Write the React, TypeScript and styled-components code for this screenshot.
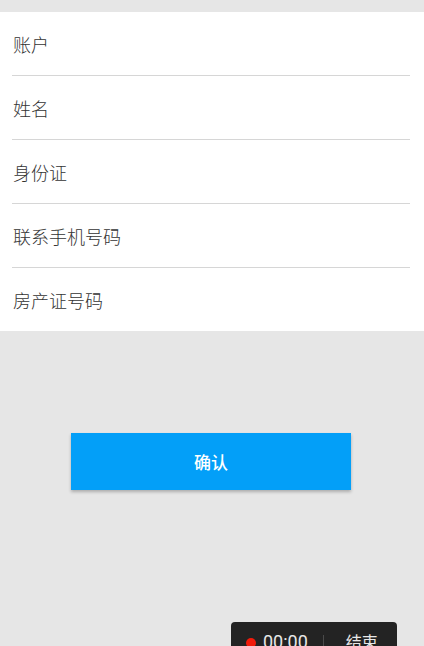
import styled, { createGlobalStyle } from 'styled-components'

const GlobalStyle = createGlobalStyle`
  html, body {
    margin: 0;
    padding: 0;
    background: #e6e6e6;
    font-family: 'Roboto', 'Noto Sans CJK SC', sans-serif;
  }
`

const fields = ['账户', '姓名', '身份证', '联系手机号码', '房产证号码']

const App = () => {
  return (
    <Page>
      <GlobalStyle />
      <Form>
        {fields.map((label, i) => (
          <Row key={label} last={i === fields.length - 1}>
            <Label>{label}</Label>
          </Row>
        ))}
      </Form>
      <ConfirmButton>确认</ConfirmButton>
      <Recorder>
        <RecDot />
        <RecTime>00:00</RecTime>
        <RecDivider />
        <RecStop>结束</RecStop>
      </Recorder>
    </Page>
  )
}

const Page = styled.div`
  position: relative;
  width: 424px;
  height: 646px;
  overflow: hidden;
  padding-top: 12px;
  box-sizing: border-box;
  background: #e6e6e6;
`

const Form = styled.div`
  background: #ffffff;
  display: flex;
  flex-direction: column;
  padding: 0 14px 0 12px;
`

const Row = styled.div<{ last?: boolean }>`
  height: 63px;
  display: flex;
  align-items: center;
  border-bottom: ${(p) => (p.last ? 'none' : '1px solid #d6d6d6')};
  &:first-child {
    height: 63px;
  }
`

const Label = styled.span`
  font-family: 'Noto Sans CJK SC', sans-serif;
  font-size: 18px;
  font-weight: 300;
  color: #333333;
  padding-left: 1px;
`

const ConfirmButton = styled.button`
  display: flex;
  align-items: center;
  justify-content: center;
  margin: 102px 0 0 71px;
  width: 280px;
  height: 57px;
  border: none;
  border-radius: 0;
  background: #039ff8;
  color: #ffffff;
  font-family: 'Noto Sans CJK SC', sans-serif;
  font-size: 17px;
  font-weight: 500;
  box-shadow: 0 2px 3px rgba(0, 0, 0, 0.25);
`

const Recorder = styled.div`
  position: absolute;
  left: 231px;
  top: 622px;
  width: 166px;
  height: 34px;
  background: #232323;
  border-radius: 4px;
  display: flex;
  align-items: center;
  padding: 4px 0 0 15px;
  box-sizing: border-box;
`

const RecDot = styled.span`
  width: 10px;
  height: 10px;
  border-radius: 50%;
  background: #f21a0a;
  margin-right: 7px;
  margin-top: 4px;
`

const RecTime = styled.span`
  font-family: 'Roboto', sans-serif;
  font-size: 18px;
  color: #e8e8e8;
`

const RecDivider = styled.span`
  width: 1px;
  height: 16px;
  background: #4a4a4a;
  margin: 4px 22px 0 15px;
`

const RecStop = styled.span`
  font-family: 'Noto Sans CJK SC', sans-serif;
  font-size: 16px;
  color: #e8e8e8;
`

export default App
